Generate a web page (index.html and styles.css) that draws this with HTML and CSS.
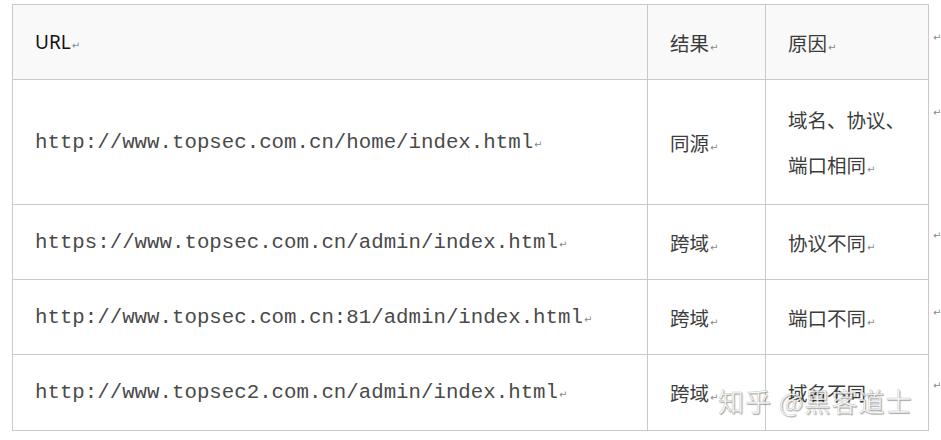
FILE: index.html
```html
<!DOCTYPE html>
<html lang="zh-CN">
<head>
<meta charset="utf-8">
<title>同源与跨域</title>
<link rel="stylesheet" href="styles.css">
</head>
<body>
<div class="page">
  <table class="doc-table">
    <colgroup>
      <col class="c-url">
      <col class="c-res">
      <col class="c-why">
      <col class="c-end">
    </colgroup>
    <tr class="row head">
      <td class="cell url-h">URL<span class="pm">↵</span></td>
      <td class="cell zh">结果<span class="pm">↵</span></td>
      <td class="cell zh">原因<span class="pm">↵</span></td>
      <td class="end"><span class="pm">↵</span></td>
    </tr>
    <tr class="row tall">
      <td class="cell mono">http://www.topsec.com.cn/home/index.html<span class="pm">↵</span></td>
      <td class="cell zh">同源<span class="pm">↵</span></td>
      <td class="cell zh two">域名、协议、<br>端口相同<span class="pm">↵</span></td>
      <td class="end"><span class="pm">↵</span></td>
    </tr>
    <tr class="row">
      <td class="cell mono">https://www.topsec.com.cn/admin/index.html<span class="pm">↵</span></td>
      <td class="cell zh">跨域<span class="pm">↵</span></td>
      <td class="cell zh">协议不同<span class="pm">↵</span></td>
      <td class="end e2"><span class="pm">↵</span></td>
    </tr>
    <tr class="row">
      <td class="cell mono">http://www.topsec.com.cn:81/admin/index.html<span class="pm">↵</span></td>
      <td class="cell zh">跨域<span class="pm">↵</span></td>
      <td class="cell zh">端口不同<span class="pm">↵</span></td>
      <td class="end"><span class="pm">↵</span></td>
    </tr>
    <tr class="row last">
      <td class="cell mono">http://www.topsec2.com.cn/admin/index.html<span class="pm">↵</span></td>
      <td class="cell zh">跨域<span class="pm">↵</span></td>
      <td class="cell zh">域名不同<span class="pm">↵</span></td>
      <td class="end e4"><span class="pm">↵</span></td>
    </tr>
  </table>
  <div class="watermark">知乎 @黑客道士</div>
</div>
</body>
</html>
```

FILE: styles.css
```css
html, body {
  margin: 0;
  padding: 0;
  background: #ffffff;
}

.page {
  position: relative;
  width: 941px;
  height: 440px;
  padding: 4px 0 0 12px;
  box-sizing: border-box;
}

.doc-table {
  border-collapse: collapse;
  table-layout: fixed;
  width: 929px;
}

.c-url { width: 635px; }
.c-res { width: 118px; }
.c-why { width: 163px; }
.c-end { width: 13px; }

.row { height: 75px; }
.row.tall { height: 125px; }
.row.last { height: 76px; }

.cell {
  border: 1px solid #c9c9c9;
  padding: 0 0 0 22px;
  vertical-align: middle;
  color: #333333;
  white-space: nowrap;
}

.head .cell {
  background: #f9f9f9;
}

.url-h {
  font-family: "Noto Sans", "Open Sans", sans-serif;
  font-size: 19px;
  color: #111111;
}

.mono {
  font-family: "Liberation Mono", "DejaVu Sans Mono", monospace;
  font-size: 20.75px;
  color: #4a4a4a;
}

.zh {
  font-family: "Noto Sans CJK SC", "Noto Sans", sans-serif;
  font-size: 19.5px;
  color: #3c3c3c;
}

.zh.two {
  line-height: 45px;
  padding-top: 4px;
  padding-bottom: 0;
}

.pm {
  font-family: "DejaVu Sans", sans-serif;
  font-size: 10px;
  color: #8a8a8a;
  margin-left: 1px;
  vertical-align: baseline;
}

.end {
  border: none;
  vertical-align: top;
  padding: 26px 0 0 3px;
  line-height: 10px;
}

.end.e2 { padding-top: 24px; }
.end.e4 { padding-top: 24px; }

.watermark {
  position: absolute;
  left: 718px;
  top: 384px;
  font-family: "Noto Sans CJK SC", sans-serif;
  font-size: 26px;
  line-height: 34px;
  letter-spacing: 1px;
  color: rgba(255, 255, 255, 0.82);
  -webkit-text-stroke: 0.5px rgba(120, 120, 120, 0.45);
  text-shadow: 1px 1px 1px rgba(0, 0, 0, 0.3);
  white-space: nowrap;
}
```
